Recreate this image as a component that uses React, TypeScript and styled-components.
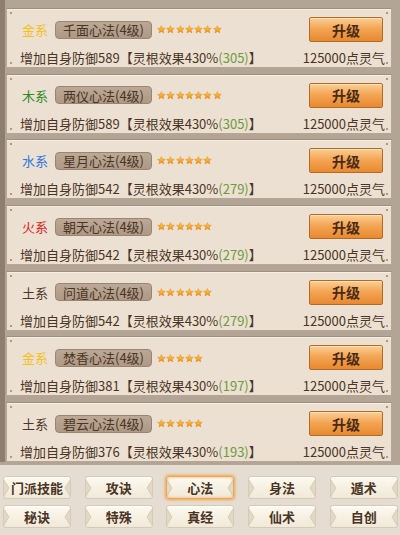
import React from 'react';
import styled, { createGlobalStyle } from 'styled-components';

const GlobalStyle = createGlobalStyle`
  html, body {
    margin: 0;
    padding: 0;
    background: #b3a595;
  }
  body {
    font-family: "Noto Sans CJK SC", "Noto Sans", sans-serif;
  }
`;

type Element = 'gold' | 'wood' | 'water' | 'fire' | 'earth';

interface Skill {
  element: Element;
  label: string;
  name: string;
  stars: number;
  defense: number;
  bonus: number;
}

const skills: Skill[] = [
  { element: 'gold', label: '金系', name: '千面心法(4级)', stars: 7, defense: 589, bonus: 305 },
  { element: 'wood', label: '木系', name: '两仪心法(4级)', stars: 7, defense: 589, bonus: 305 },
  { element: 'water', label: '水系', name: '星月心法(4级)', stars: 6, defense: 542, bonus: 279 },
  { element: 'fire', label: '火系', name: '朝天心法(4级)', stars: 6, defense: 542, bonus: 279 },
  { element: 'earth', label: '土系', name: '问道心法(4级)', stars: 6, defense: 542, bonus: 279 },
  { element: 'gold', label: '金系', name: '焚香心法(4级)', stars: 5, defense: 381, bonus: 197 },
  { element: 'earth', label: '土系', name: '碧云心法(4级)', stars: 5, defense: 376, bonus: 193 },
];

const tabs = ['门派技能', '攻诀', '心法', '身法', '遁术', '秘诀', '特殊', '真经', '仙术', '自创'];

const elementColors: Record<Element, string> = {
  gold: '#f2c21c',
  wood: '#2f8a23',
  water: '#2b78de',
  fire: '#e01d1d',
  earth: '#4a3828',
};

const Page = styled.div`
  width: 400px;
  height: 535px;
  display: flex;
  flex-direction: column;
  overflow: hidden;
  background: #b3a595;
`;

const List = styled.div`
  display: flex;
  flex-direction: column;
  gap: 5.7px;
  width: 400px;
  box-sizing: border-box;
  padding: 8px 8px 0 1px;
  border-left: 5px solid #8e7e6f;
`;

const Card = styled.div`
  height: 60px;
  box-sizing: border-box;
  background-color: #ece0d2;
  background-image:
    radial-gradient(circle at 4px 4px, #a8998a 1px, transparent 1.5px),
    radial-gradient(circle at calc(100% - 4px) 4px, #a8998a 1px, transparent 1.5px),
    radial-gradient(circle at 4px calc(100% - 4px), #a8998a 1px, transparent 1.5px),
    radial-gradient(circle at calc(100% - 4px) calc(100% - 4px), #a8998a 1px, transparent 1.5px);
  border: 1px solid #b6a693;
  border-top-color: #9f8f7e;
  box-shadow: inset 0 1px 0 #f7eee2;
  padding: 8px 8px 0 12px;
  display: flex;
  flex-direction: column;
`;

const TopRow = styled.div`
  display: flex;
  align-items: center;
  height: 25px;
`;

const ElementLabel = styled.span<{ $element: Element }>`
  color: ${(p) => elementColors[p.$element]};
  font-size: 13px;
  margin-left: 3px;
  width: 33px;
  line-height: 1;
`;

const NamePill = styled.span`
  display: inline-flex;
  align-items: center;
  justify-content: center;
  width: 97px;
  height: 18px;
  box-sizing: border-box;
  background: linear-gradient(#bba895, #ad9985);
  border: 1px solid #9a8572;
  border-radius: 4px;
  color: #4a3424;
  font-size: 13px;
  line-height: 1;
`;

const Stars = styled.span`
  display: inline-flex;
  gap: 0.5px;
  margin-left: 5px;
`;

const UpgradeButton = styled.button`
  margin-left: auto;
  width: 74px;
  height: 25px;
  border: 1px solid #b46a25;
  border-radius: 2px;
  background: linear-gradient(#fbcf94 0%, #f3a656 45%, #e8892f 100%);
  box-shadow: inset 0 1px 0 #ffe3bd;
  color: #4a2a12;
  font-family: "Noto Sans CJK SC", sans-serif;
  font-size: 14px;
  font-weight: 700;
  padding: 0;
  cursor: pointer;
`;

const BottomRow = styled.div`
  display: flex;
  align-items: center;
  justify-content: space-between;
  margin-top: 7px;
  margin-left: 1px;
  margin-right: -2px;
  height: 17px;
  font-size: 13px;
  color: #4a3424;
  line-height: 1;
  white-space: nowrap;
`;

const Bonus = styled.span`
  color: #6d9a3d;
`;

const TabArea = styled.div`
  flex: 1;
  margin-top: 3px;
  background: #e5ddd2;
  display: grid;
  grid-template-columns: repeat(5, 68px);
  grid-auto-rows: 23px;
  column-gap: 13.7px;
  row-gap: 6px;
  padding: 11px 2px 0 3px;
`;

const Tab = styled.button<{ $active?: boolean }>`
  position: relative;
  padding: 0;
  border: 1px solid ${(p) => (p.$active ? '#eaa55a' : '#d6cab6')};
  border-radius: 3px;
  background: linear-gradient(#fdf9ef, #f1e9d8);
  box-shadow: ${(p) => (p.$active ? '0 0 3px 1px #f2a448, inset 0 0 3px #f5b05e' : 'inset 0 1px 0 #fff')};
  color: #4a3424;
  font-family: "Noto Sans CJK SC", sans-serif;
  font-size: 13px;
  font-weight: 700;
  cursor: pointer;
  overflow: hidden;
`;

const Notch = styled.svg<{ $side: 'left' | 'right' }>`
  position: absolute;
  top: 3px;
  ${(p) => (p.$side === 'left' ? 'left: 0;' : 'right: 0;')}
  width: 6px;
  height: 16px;
`;

const Star = () => (
  <svg width="8.8" height="8.8" viewBox="0 0 24 24">
    <defs>
      <linearGradient id="starfill" x1="0" y1="0" x2="0" y2="1">
        <stop offset="0" stopColor="#ffd54a" />
        <stop offset="1" stopColor="#f08a12" />
      </linearGradient>
    </defs>
    <path
      d="M12 1.5l3.1 6.9 7.4.7-5.6 5 1.7 7.4L12 17.6l-6.6 3.9 1.7-7.4-5.6-5 7.4-.7z"
      fill="url(#starfill)"
      stroke="#d9780c"
      strokeWidth="1"
    />
  </svg>
);

const App = () => {
  return (
    <>
      <GlobalStyle />
      <Page>
        <List>
          {skills.map((s, i) => (
            <Card key={i}>
              <TopRow>
                <ElementLabel $element={s.element}>{s.label}</ElementLabel>
                <NamePill>{s.name}</NamePill>
                <Stars>
                  {Array.from({ length: s.stars }).map((_, k) => (
                    <Star key={k} />
                  ))}
                </Stars>
                <UpgradeButton>升级</UpgradeButton>
              </TopRow>
              <BottomRow>
                <span>
                  增加自身防御{s.defense}【灵根效果430%<Bonus>({s.bonus})</Bonus>】
                </span>
                <span>125000点灵气</span>
              </BottomRow>
            </Card>
          ))}
        </List>
        <TabArea>
          {tabs.map((t) => (
            <Tab key={t} $active={t === '心法'}>
              <Notch $side="left" viewBox="0 0 6 16">
                <path d="M0 0L5 8L0 16" fill="#e2d8c6" stroke="#d3c6b0" strokeWidth="0.8" />
              </Notch>
              {t}
              <Notch $side="right" viewBox="0 0 6 16">
                <path d="M6 0L1 8L6 16" fill="#e2d8c6" stroke="#d3c6b0" strokeWidth="0.8" />
              </Notch>
            </Tab>
          ))}
        </TabArea>
      </Page>
    </>
  );
};

export default App;
